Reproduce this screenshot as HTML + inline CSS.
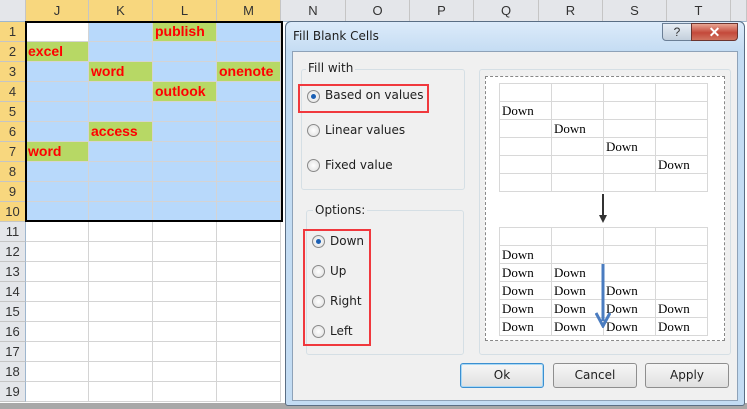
<!DOCTYPE html>
<html><head><style>
*{margin:0;padding:0;box-sizing:border-box}
body{width:747px;height:409px;overflow:hidden;background:#fff;font-family:"Liberation Sans",sans-serif;position:relative}
.a{position:absolute}
.ch{position:absolute;top:0;height:22px;border-right:1px solid #c5c5c5;border-bottom:1px solid #9eb6ce;font-size:13px;text-align:center;line-height:22px;color:#333}
.rh{position:absolute;left:0;width:26px;height:20px;border-bottom:1px solid #c5c5c5;border-right:1px solid #9eb6ce;font-size:13px;text-align:center;line-height:20px;color:#333}
.cell{position:absolute;height:20px;border-right:1px solid #d4d4d4;border-bottom:1px solid #d4d4d4}
.g{background:#b7d865;color:#f00;font-weight:bold;font-size:14px;line-height:19px;padding-left:2px}
.lbl{position:absolute;font-family:"DejaVu Sans","Liberation Sans",sans-serif;font-size:12px;color:#1e1e1e}
.rad{position:absolute;width:13px;height:13px;border-radius:50%;border:1px solid #8a8a8a;background:radial-gradient(#fff,#ddd)}
.rad.on::after{content:"";position:absolute;left:3px;top:3px;width:5px;height:5px;border-radius:50%;background:#1a5fb4}
.btn{position:absolute;height:25px;border:1px solid #8e8e8e;border-radius:3px;background:linear-gradient(#f6f6f6,#e0e0e0);font-family:"DejaVu Sans",sans-serif;font-size:12px;text-align:center;line-height:23px;color:#1e1e1e}
.pg{position:absolute;border-collapse:collapse;font-family:"Liberation Serif",serif;font-size:13px}
.pg td{border:1px solid #d8d8d8;width:52px;height:18px;padding:0 2px;line-height:16px;white-space:nowrap}
</style></head><body>
<!-- headers -->
<div class="ch" style="left:0;width:26px;background:#e4e6ea"></div>
<div class="ch" style="left:26px;width:63px;background:#f8d77e">J</div>
<div class="ch" style="left:89px;width:64px;background:#f8d77e">K</div>
<div class="ch" style="left:153px;width:64px;background:#f8d77e">L</div>
<div class="ch" style="left:217px;width:64px;background:#f8d77e">M</div>
<div class="ch" style="left:281px;width:65px;background:#e4e6ea">N</div>
<div class="ch" style="left:346px;width:64px;background:#e4e6ea">O</div>
<div class="ch" style="left:410px;width:64px;background:#e4e6ea">P</div>
<div class="ch" style="left:474px;width:65px;background:#e4e6ea">Q</div>
<div class="ch" style="left:539px;width:64px;background:#e4e6ea">R</div>
<div class="ch" style="left:603px;width:64px;background:#e4e6ea">S</div>
<div class="ch" style="left:667px;width:64px;background:#e4e6ea">T</div>
<div class="ch" style="left:731px;width:16px;background:#e4e6ea"></div>
<!-- rows -->
<div id="rows"></div>
<script>
var h='';
for(var r=1;r<=19;r++){var y=22+(r-1)*20;
h+='<div class="rh" style="top:'+y+'px;background:'+(r<=10?'#f8d77e':'#e4e6ea')+'">'+r+'</div>';
var xs=[26,89,153,217,281];
for(var c=0;c<4;c++){h+='<div class="cell" style="left:'+xs[c]+'px;top:'+y+'px;width:'+(xs[c+1]-xs[c])+'px;background:'+(r<=10?'#b8d9fb':'#fff')+'"></div>';}
}
var gs=[[1,2,'publish'],[2,0,'excel'],[3,1,'word'],[3,3,'onenote'],[4,2,'outlook'],[6,1,'access'],[7,0,'word']];
var xs=[26,89,153,217,281];
gs.forEach(function(g){h+='<div class="cell g" style="left:'+xs[g[1]]+'px;top:'+(22+(g[0]-1)*20)+'px;width:'+(xs[g[1]+1]-xs[g[1]])+'px">'+g[2]+'</div>';});
h+='<div class="cell" style="left:26px;top:22px;width:63px;background:#fff"></div>';
document.getElementById('rows').innerHTML=h;
</script>
<div class="a" style="left:25px;top:21px;width:258px;height:201px;border:2px solid #000"></div>
<div class="a" style="left:0;top:403px;width:747px;height:6px;background:#a8a8a8"></div>
<!-- dialog -->
<div class="a" style="left:285px;top:21px;width:460px;height:385px;background:#c3dcf3;border:1px solid #5a6e84;border-radius:6px 6px 3px 3px"></div>
<div class="a" style="left:286px;top:22px;width:458px;height:28px;background:linear-gradient(#dcebfa,#c6ddf3);border-radius:6px 6px 0 0"></div>
<div class="lbl" style="left:293px;top:29px;font-size:12px">Fill Blank Cells</div>
<div class="a" style="left:662px;top:23px;width:30px;height:18px;border:1px solid #6b7f96;border-radius:0 0 0 4px;background:linear-gradient(#e8eef5,#c3cfdc);font-size:12px;text-align:center;color:#333;line-height:16px">?</div>
<div class="a" style="left:691px;top:23px;width:47px;height:18px;border:1px solid #6b3530;border-radius:0 0 4px 0;background:linear-gradient(#e8a593,#c4493a 55%,#d0735e);font-size:14px;text-align:center;color:#fff;font-weight:bold;line-height:16px">✕</div>
<div class="a" style="left:292px;top:51px;width:446px;height:350px;background:#f0f0f0;border:1px solid #8ea2b8"></div>
<!-- fill with group -->
<div class="a" style="left:301px;top:69px;width:164px;height:121px;border:1px solid #d5dfe5;border-radius:3px"></div>
<div class="lbl" style="left:306px;top:61px;background:#f0f0f0;padding:0 2px">Fill with</div>
<div class="rad on" style="left:307px;top:90px"></div><div class="lbl" style="left:325px;top:88px">Based on values</div>
<div class="rad" style="left:307px;top:124px"></div><div class="lbl" style="left:325px;top:123px">Linear values</div>
<div class="rad" style="left:307px;top:159px"></div><div class="lbl" style="left:325px;top:158px">Fixed value</div>
<div class="a" style="left:298px;top:84px;width:131px;height:29px;border:2px solid #f0383d"></div>
<!-- options group -->
<div class="a" style="left:306px;top:210px;width:158px;height:145px;border:1px solid #d5dfe5;border-radius:3px"></div>
<div class="lbl" style="left:313px;top:203px;background:#f0f0f0;padding:0 2px">Options:</div>
<div class="rad on" style="left:312px;top:235px"></div><div class="lbl" style="left:330px;top:234px">Down</div>
<div class="rad" style="left:312px;top:265px"></div><div class="lbl" style="left:330px;top:264px">Up</div>
<div class="rad" style="left:312px;top:295px"></div><div class="lbl" style="left:330px;top:294px">Right</div>
<div class="rad" style="left:312px;top:325px"></div><div class="lbl" style="left:330px;top:324px">Left</div>
<div class="a" style="left:303px;top:229px;width:68px;height:117px;border:2px solid #f0383d"></div>
<!-- preview -->
<div class="a" style="left:479px;top:69px;width:252px;height:286px;border:1px solid #d5dfe5;border-radius:3px"></div>
<div class="a" style="left:485px;top:76px;width:240px;height:265px;border:1px dashed #888;background:#fff"></div>
<table class="pg" style="left:499px;top:83px">
<tr><td></td><td></td><td></td><td></td></tr>
<tr><td>Down</td><td></td><td></td><td></td></tr>
<tr><td></td><td>Down</td><td></td><td></td></tr>
<tr><td></td><td></td><td>Down</td><td></td></tr>
<tr><td></td><td></td><td></td><td>Down</td></tr>
<tr><td></td><td></td><td></td><td></td></tr>
</table>
<svg class="a" style="left:596px;top:194px" width="14" height="32"><line x1="7" y1="0" x2="7" y2="26" stroke="#333" stroke-width="2"/><path d="M3 21 L7 29 L11 21Z" fill="#333"/></svg>
<table class="pg" style="left:499px;top:227px">
<tr><td></td><td></td><td></td><td></td></tr>
<tr><td>Down</td><td></td><td></td><td></td></tr>
<tr><td>Down</td><td>Down</td><td></td><td></td></tr>
<tr><td>Down</td><td>Down</td><td>Down</td><td></td></tr>
<tr><td>Down</td><td>Down</td><td>Down</td><td>Down</td></tr>
<tr><td>Down</td><td>Down</td><td>Down</td><td>Down</td></tr>
</table>
<svg class="a" style="left:595px;top:263px" width="16" height="65"><line x1="8" y1="1" x2="8" y2="58" stroke="#4a7cc0" stroke-width="3"/><path d="M1 50 L8 63 L15 50" fill="none" stroke="#4a7cc0" stroke-width="3"/></svg>
<!-- buttons -->
<div class="btn" style="left:460px;top:363px;width:84px;border-color:#3c8fd0;box-shadow:inset 0 0 0 1px #a8d8f5">Ok</div>
<div class="btn" style="left:553px;top:363px;width:84px">Cancel</div>
<div class="btn" style="left:645px;top:363px;width:84px">Apply</div>
</body></html>
